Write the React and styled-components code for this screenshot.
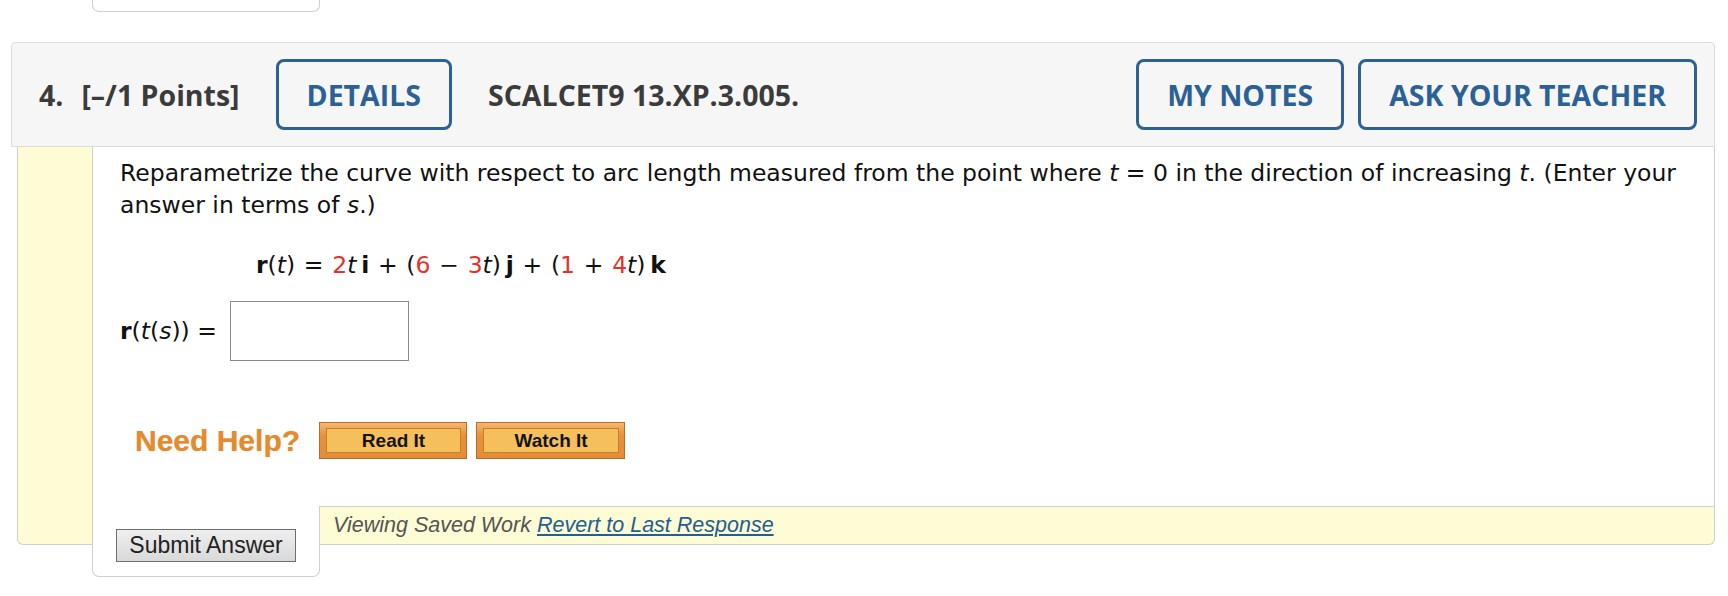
import styled, { createGlobalStyle } from "styled-components";

const GlobalStyle = createGlobalStyle`
  body {
    margin: 0;
    background: #fff;
  }
`;

const Page = styled.div`
  width: 1728px;
  min-height: 596px;
  box-sizing: border-box;
  padding: 0 13px 51px 11px;
`;

const PrevSubmitCell = styled.div`
  width: 228px;
  height: 12px;
  margin-left: 81px;
  box-sizing: border-box;
  background: #fff;
  border: 1px solid #cfcfcf;
  border-top: none;
  border-radius: 0 0 7px 7px;
`;

const Header = styled.div`
  margin-top: 30px;
  height: 105px;
  box-sizing: border-box;
  display: flex;
  align-items: center;
  padding: 0 17px 0 27px;
  background: #f6f6f6;
  border: 1px solid #dcdcdc;
  border-radius: 4px 4px 0 0;
  font-family: "Open Sans", "Noto Sans", sans-serif;
  font-weight: 700;
  font-size: 28.5px;
  color: #3b3b3b;
`;

const Number = styled.span`
  margin-right: 18px;
`;

const Points = styled.span`
  margin-right: 36px;
`;

const Code = styled.span`
  margin-left: 36px;
  margin-right: auto;
`;

const OutlineButton = styled.button`
  height: 71px;
  box-sizing: border-box;
  padding: 0 28px;
  background: transparent;
  border: 3px solid #2b6196;
  border-radius: 8px;
  font-family: inherit;
  font-weight: 700;
  font-size: 28.5px;
  color: #2b6196;
  margin-left: ${(p) => (p.gap ? `${p.gap}px` : "0")};
`;

const QuestionBox = styled.div`
  margin-left: 6px;
  display: flex;
  background: #fefcd4;
  border: 1px solid #cfcfcf;
  border-top: none;
  border-radius: 0 0 6px 6px;
`;

const Gutter = styled.div`
  width: 74px;
  flex: none;
`;

const Main = styled.div`
  flex: 1;
  display: flex;
  flex-direction: column;
`;

const Content = styled.div`
  background: #fff;
  border-left: 1px solid #cfcfcf;
  padding: 10px 24px 47px 27px;
  font-family: "DejaVu Sans", Verdana, sans-serif;
  font-size: 23.5px;
  line-height: 32px;
  color: #111;
`;

const Prompt = styled.p`
  margin: 0;
`;

const Equation = styled.div`
  margin: 28px 0 0 136px;
  white-space: pre;
  word-spacing: 1.25px;
`;

const B = styled.b`
  font-weight: 700;
`;

const I = styled.i`
  font-style: italic;
`;

const Red = styled.span`
  color: #e5322b;
`;

const AnswerRow = styled.div`
  margin-top: 20px;
  display: flex;
  align-items: center;
  gap: 13px;
`;

const AnswerInput = styled.input`
  width: 179px;
  height: 60px;
  box-sizing: border-box;
  border: 1px solid #8a8a8a;
  background: #fff;
  margin: 0;
`;

const HelpRow = styled.div`
  margin: 61px 0 0 15px;
  display: flex;
  align-items: center;
  height: 37px;
`;

const NeedHelp = styled.span`
  font-family: "Liberation Sans", Arial, sans-serif;
  font-weight: 700;
  font-size: 30px;
  color: #e38b31;
  margin-right: 19px;
  text-shadow: 0 0 1px rgba(227, 139, 49, 0.6);
`;

const HelpButton = styled.button`
  width: ${(p) => p.w}px;
  height: 37px;
  box-sizing: border-box;
  padding: 5px 5px 5px 6px;
  margin-right: 9px;
  border: 1px solid #b2702b;
  background: linear-gradient(#f7b870, #e8913c 35%, #e58c36);
  display: flex;
`;

const HelpLabel = styled.span`
  flex: 1;
  display: flex;
  align-items: center;
  justify-content: center;
  border: 1px solid #c47d31;
  background: #f5bf5c;
  font-family: "Liberation Sans", Arial, sans-serif;
  font-weight: 700;
  font-size: 19px;
  color: #141414;
`;

const BottomRow = styled.div`
  display: flex;
  align-items: flex-start;
  margin-bottom: -33px;
`;

const SubmitCell = styled.div`
  width: 228px;
  height: 71px;
  flex: none;
  box-sizing: border-box;
  padding: 23px 0 0 23px;
  background: #fff;
  border: 1px solid #cfcfcf;
  border-top: none;
  border-radius: 0 0 7px 7px;
`;

const SubmitButton = styled.button`
  width: 180px;
  height: 33px;
  padding: 0;
  border: 1px solid #6f6f6f;
  background: linear-gradient(#efefef, #d9d9d9);
  font-family: "Liberation Sans", Arial, sans-serif;
  font-size: 23px;
  color: #222;
`;

const ViewingBar = styled.div`
  flex: 1;
  height: 38px;
  box-sizing: border-box;
  border-top: 1px solid #cfcfcf;
  padding-left: 13px;
  display: flex;
  align-items: center;
  font-family: "Liberation Sans", Arial, sans-serif;
  font-style: italic;
  font-size: 21.5px;
  color: #555;
`;

const RevertLink = styled.a`
  margin-left: 6px;
  color: #245e93;
  text-decoration: underline;
`;

export default function App() {
  return (
    <Page>
      <GlobalStyle />
      <PrevSubmitCell />
      <Header>
        <Number>4.</Number>
        <Points>[–/1 Points]</Points>
        <OutlineButton>DETAILS</OutlineButton>
        <Code>SCALCET9 13.XP.3.005.</Code>
        <OutlineButton>MY NOTES</OutlineButton>
        <OutlineButton gap={14}>ASK YOUR TEACHER</OutlineButton>
      </Header>
      <QuestionBox>
        <Gutter />
        <Main>
          <Content>
            <Prompt>
              Reparametrize the curve with respect to arc length measured from the point where <I>t</I> = 0 in
              the direction of increasing <I>t</I>. (Enter your answer in terms of <I>s</I>.)
            </Prompt>
            <Equation>
              <B>r</B>(<I>t</I>) = <Red>2</Red><I>t</I>{"\u2009"}<B>i</B> + (<Red>6</Red> − <Red>3</Red>
              <I>t</I>){"\u2009"}<B>j</B> + (<Red>1</Red> + <Red>4</Red><I>t</I>){"\u2009"}<B>k</B>
            </Equation>
            <AnswerRow>
              <span>
                <B>r</B>(<I>t</I>(<I>s</I>)) =
              </span>
              <AnswerInput type="text" />
            </AnswerRow>
            <HelpRow>
              <NeedHelp>Need Help?</NeedHelp>
              <HelpButton w={148}>
                <HelpLabel>Read It</HelpLabel>
              </HelpButton>
              <HelpButton w={149}>
                <HelpLabel>Watch It</HelpLabel>
              </HelpButton>
            </HelpRow>
          </Content>
          <BottomRow>
            <SubmitCell>
              <SubmitButton>Submit Answer</SubmitButton>
            </SubmitCell>
            <ViewingBar>
              Viewing Saved Work<RevertLink href="#">Revert to Last Response</RevertLink>
            </ViewingBar>
          </BottomRow>
        </Main>
      </QuestionBox>
    </Page>
  );
}
